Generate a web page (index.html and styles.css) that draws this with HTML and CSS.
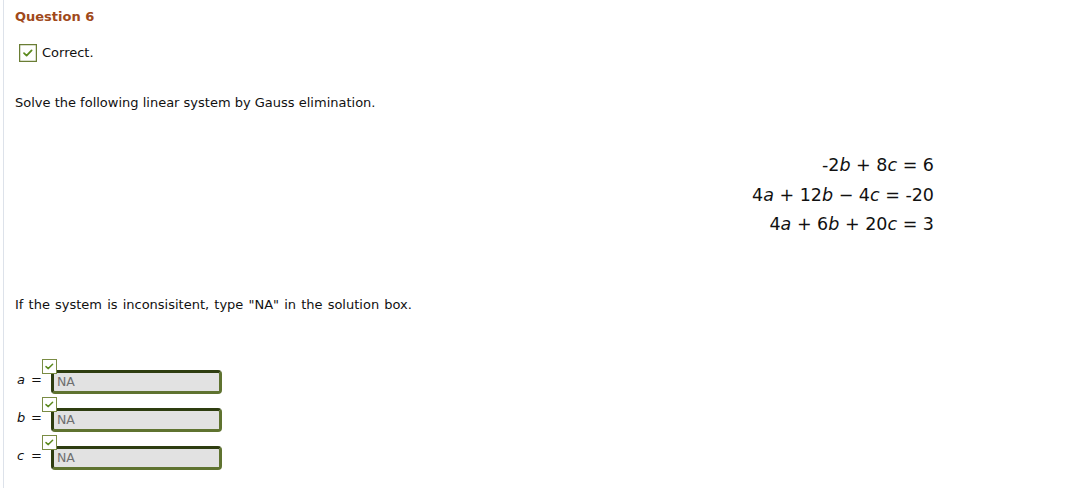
FILE: index.html
```html
<!DOCTYPE html>
<html>
<head>
<meta charset="utf-8">
<link rel="stylesheet" href="styles.css">
</head>
<body>
<div class="page">
  <div class="q-title">Question 6</div>
  <div class="status">
    <svg class="check-big" width="18" height="18" viewBox="0 0 18 18">
      <rect x="0.5" y="0.5" width="17" height="17" fill="#fff" stroke="#6a7d34" stroke-width="1.5"/>
      <path d="M5 9.2 L7.6 11.6 L12.6 6.4" fill="none" stroke="#5c8a1e" stroke-width="1.8" stroke-linecap="round" stroke-linejoin="round"/>
    </svg>
    <span>Correct.</span>
  </div>
  <p class="text solve">Solve the following linear system by Gauss elimination.</p>
  <div class="system">
    <div class="eq">-2<i>b</i> + 8<i>c</i> = 6</div>
    <div class="eq">4<i>a</i> + 12<i>b</i> &minus; 4<i>c</i> = -20</div>
    <div class="eq">4<i>a</i> + 6<i>b</i> + 20<i>c</i> = 3</div>
  </div>
  <p class="text note">If the system is inconsisitent, type "NA" in the solution box.</p>
  <div class="answers">
    <div class="row">
      <span class="lbl"><i>a</i></span><span class="eqs">=</span>
      <div class="field">
        <svg class="check-small" width="15" height="15" viewBox="0 0 15 15">
          <rect x="0.5" y="0.5" width="14" height="14" fill="#fff" stroke="#7a8c44" stroke-width="1"/>
          <path d="M4 7.6 L6.3 9.6 L10.6 5.2" fill="none" stroke="#5c8a1e" stroke-width="1.5" stroke-linecap="round" stroke-linejoin="round"/>
        </svg>
        <div class="box">NA</div>
      </div>
    </div>
    <div class="row">
      <span class="lbl"><i>b</i></span><span class="eqs">=</span>
      <div class="field">
        <svg class="check-small" width="15" height="15" viewBox="0 0 15 15">
          <rect x="0.5" y="0.5" width="14" height="14" fill="#fff" stroke="#7a8c44" stroke-width="1"/>
          <path d="M4 7.6 L6.3 9.6 L10.6 5.2" fill="none" stroke="#5c8a1e" stroke-width="1.5" stroke-linecap="round" stroke-linejoin="round"/>
        </svg>
        <div class="box">NA</div>
      </div>
    </div>
    <div class="row">
      <span class="lbl"><i>c</i></span><span class="eqs">=</span>
      <div class="field">
        <svg class="check-small" width="15" height="15" viewBox="0 0 15 15">
          <rect x="0.5" y="0.5" width="14" height="14" fill="#fff" stroke="#7a8c44" stroke-width="1"/>
          <path d="M4 7.6 L6.3 9.6 L10.6 5.2" fill="none" stroke="#5c8a1e" stroke-width="1.5" stroke-linecap="round" stroke-linejoin="round"/>
        </svg>
        <div class="box">NA</div>
      </div>
    </div>
  </div>
</div>
</body>
</html>
```
FILE: styles.css
```css
html, body {
  margin: 0;
  padding: 0;
  background: #ffffff;
}
body {
  font-family: "DejaVu Sans", Verdana, sans-serif;
  color: #111;
  font-size: 13px;
}
.page {
  margin-left: 3px;
  border-left: 1px solid #dde2ea;
  padding-left: 11px;
  padding-top: 9px;
  height: 479px;
}
.q-title {
  font-weight: bold;
  color: #a0491a;
  font-size: 13px;
  line-height: 16px;
}
.status {
  display: flex;
  align-items: center;
  margin-top: 19px;
  margin-left: 4px;
  gap: 5px;
  line-height: 16px;
}
.check-big {
  display: block;
}
.text {
  margin: 0;
  line-height: 16px;
}
.solve {
  margin-top: 33px;
}
.system {
  width: 919px;
  margin-top: 40px;
  display: flex;
  flex-direction: column;
  align-items: flex-end;
}
.eq {
  font-size: 17.5px;
  line-height: 29.5px;
  color: #111;
  white-space: pre;
}
.eq i {
  font-style: oblique;
}
.note {
  margin-top: 57px;
  word-spacing: 1px;
}
.answers {
  margin-top: 57px;
  display: flex;
  flex-direction: column;
  gap: 14px;
}
.row {
  display: flex;
  align-items: center;
  height: 24px;
}
.lbl {
  width: 14px;
  padding-left: 2px;
  position: relative;
  top: -2px;
}
.lbl i {
  font-style: oblique;
}
.eqs {
  width: 20px;
  position: relative;
  top: -2px;
}
.field {
  position: relative;
}
.check-small {
  position: absolute;
  left: -9px;
  top: -11px;
  display: block;
}
.box {
  box-sizing: border-box;
  width: 171px;
  height: 24px;
  border: 3px solid #5f7330;
  border-top-color: #2e3d10;
  border-left-color: #2e3d10;
  border-radius: 4px;
  background: #e2e2e2;
  color: #6f6f6f;
  font-size: 12.5px;
  line-height: 18px;
  padding-left: 3px;
}
```
